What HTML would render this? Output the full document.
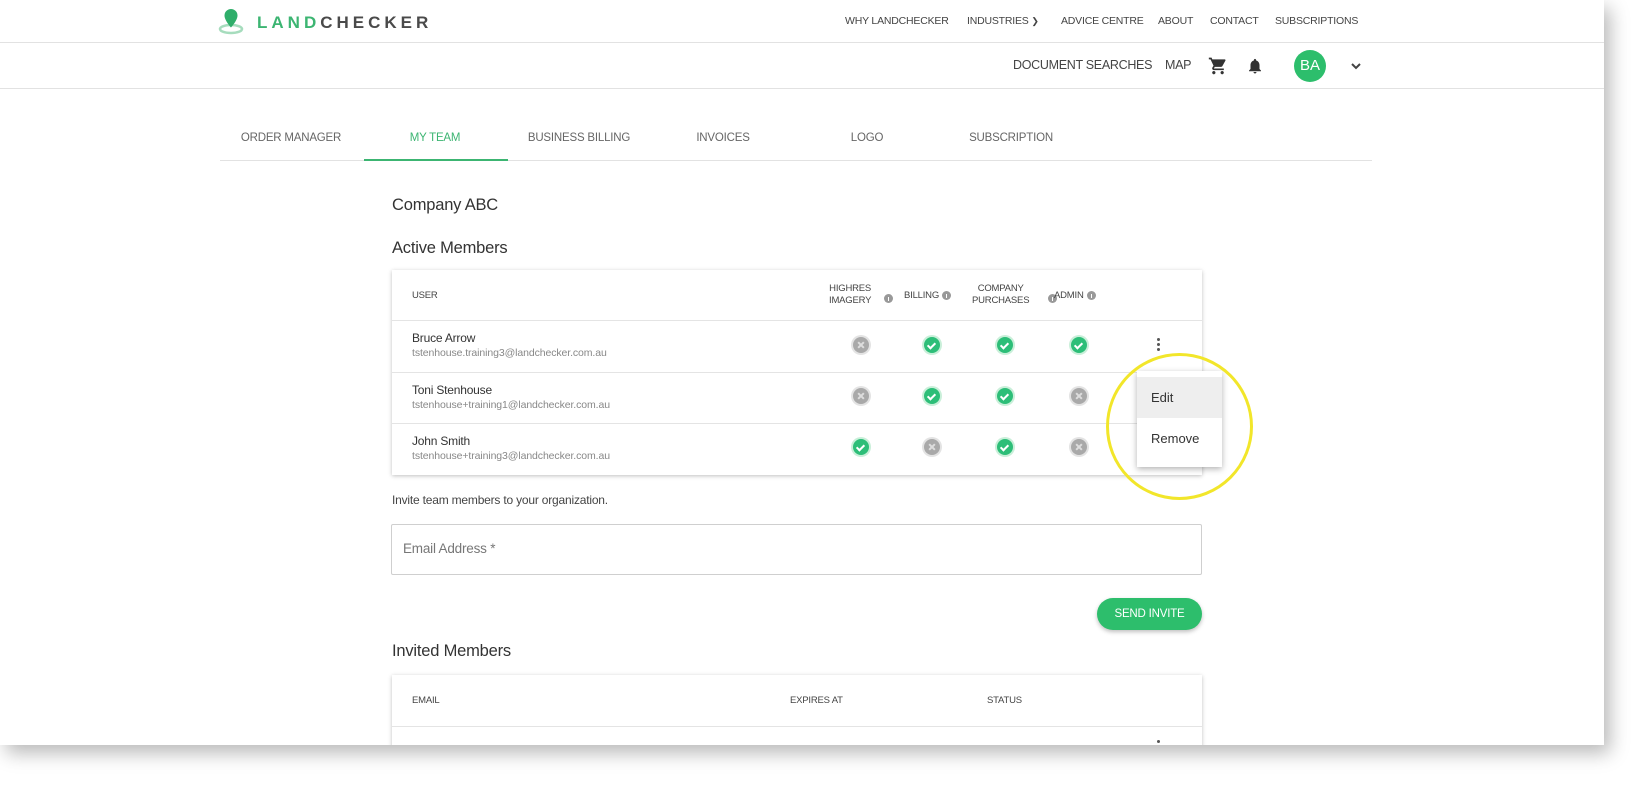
<!DOCTYPE html>
<html><head><meta charset="utf-8"><style>
*{margin:0;padding:0;box-sizing:border-box}
body{width:1644px;height:798px;background:#fff;font-family:"Liberation Sans",sans-serif;position:relative;overflow:hidden;color:#333}
.page{position:absolute;left:0;top:0;width:1604px;height:745px;background:#fff;box-shadow:6px 8px 18px rgba(0,0,0,.28);overflow:hidden}
.a{position:absolute;white-space:nowrap}
.nav{font-size:10.5px;color:#444;top:15px;letter-spacing:-0.2px}
.nav2{font-size:12.5px;color:#444;top:58px;letter-spacing:-0.3px}
.hl{position:absolute;left:0;width:1604px;height:1px;background:#e2e2e2}
.tab{position:absolute;top:132px;font-size:11.5px;color:#666;width:144px;text-align:center;letter-spacing:-0.2px}
.card{position:absolute;left:392px;width:810px;background:#fff;box-shadow:0 1px 4px rgba(0,0,0,.25)}
.rl{position:absolute;left:0;width:100%;height:1px;background:#e4e4e4}
.th{font-size:9.5px;color:#444;text-align:center;line-height:12px;letter-spacing:-0.2px}
.nm{font-size:12px;color:#333;letter-spacing:-0.2px}
.em{font-size:10.5px;color:#888;letter-spacing:-0.1px}
.ok,.no{position:absolute;width:16px;height:16px;border-radius:50%}
.ok{background:#2dbe78;box-shadow:0 0 0 2px #c9efd9}
.no{background:#a9a9a9;box-shadow:0 0 0 2px #e3e3e3}
.ok:after{content:"";position:absolute;left:5px;top:3.5px;width:3px;height:6px;border:solid #fff;border-width:0 2px 2px 0;transform:rotate(45deg)}
.no:before,.no:after{content:"";position:absolute;left:7px;top:4px;width:2px;height:8px;background:#ddd;transform:rotate(45deg)}
.no:after{transform:rotate(-45deg)}
.i{display:inline-block;width:9px;height:9px;border-radius:50%;background:#999;vertical-align:middle;margin-left:3px;position:relative}
.i:after{content:"";position:absolute;left:4px;top:3px;width:1px;height:4px;background:#fff}
.dot{position:absolute;width:3px;height:3px;border-radius:50%;background:#555}
.h{font-size:16.5px;color:#333;letter-spacing:-0.2px}
</style></head><body>
<div class="page">
<svg class="a" style="left:218px;top:7px" width="36" height="28" viewBox="0 0 36 28"><ellipse cx="13" cy="22" rx="11" ry="4" fill="none" stroke="#a6dcbd" stroke-width="2.5"/><path d="M13 2a6.5 6.5 0 0 1 6.5 6.5c0 5-6.5 12-6.5 12s-6.5-7-6.5-12A6.5 6.5 0 0 1 13 2z" fill="#2fae6a"/></svg>
<div class="a" style="left:257px;top:13px;font-size:17px;letter-spacing:4px;font-weight:bold"><span style="color:#3cb572">LAND</span><span style="color:#4a4a4a">CHECKER</span></div>
<div class="a nav" style="left:845px">WHY LANDCHECKER</div>
<div class="a nav" style="left:967px">INDUSTRIES <span style="font-size:9px">&#10095;</span></div>
<div class="a nav" style="left:1061px">ADVICE CENTRE</div>
<div class="a nav" style="left:1158px">ABOUT</div>
<div class="a nav" style="left:1210px">CONTACT</div>
<div class="a nav" style="left:1275px">SUBSCRIPTIONS</div>
<div class="hl" style="top:42px"></div>
<div class="a nav2" style="left:1013px">DOCUMENT SEARCHES</div>
<div class="a nav2" style="left:1165px">MAP</div>
<svg class="a" style="left:1208px;top:56px" width="20" height="20" viewBox="0 0 24 24"><path fill="#333" d="M7 18c-1.1 0-2 .9-2 2s.9 2 2 2 2-.9 2-2-.9-2-2-2zM1 2v2h2l3.6 7.6-1.4 2.4c-.1.3-.2.6-.2 1 0 1.1.9 2 2 2h12v-2H7.4c-.1 0-.2-.1-.2-.2v-.1l.9-1.7h7.5c.8 0 1.4-.4 1.700-1l3.6-6.5c.1-.2.1-.3.1-.5 0-.6-.4-1-1-1H5.2l-.9-2H1zm16 16c-1.1 0-2 .9-2 2s.9 2 2 2 2-.9 2-2-.9-2-2-2z"/></svg>
<svg class="a" style="left:1246px;top:56px" width="18" height="20" viewBox="0 0 24 24"><path fill="#333" d="M12 22c1.1 0 2-.9 2-2h-4c0 1.1.9 2 2 2zm6-6v-5c0-3.1-1.6-5.6-4.5-6.3V4c0-.8-.7-1.5-1.5-1.5s-1.5.7-1.5 1.5v.7C7.6 5.4 6 7.9 6 11v5l-2 2v1h16v-1l-2-2z"/></svg>
<div class="a" style="left:1294px;top:50px;width:32px;height:32px;border-radius:50%;background:#2dbe6c;color:#fff;font-size:15px;text-align:center;line-height:32px">BA</div>
<svg class="a" style="left:1350px;top:61px" width="12" height="10"><path d="M2 3l4 4 4-4" stroke="#444" stroke-width="2" fill="none"/></svg>
<div class="hl" style="top:88px"></div>
<div class="tab" style="left:219px">ORDER MANAGER</div>
<div class="tab" style="left:363px;color:#3cb572">MY TEAM</div>
<div class="tab" style="left:507px">BUSINESS BILLING</div>
<div class="tab" style="left:651px">INVOICES</div>
<div class="tab" style="left:795px">LOGO</div>
<div class="tab" style="left:939px">SUBSCRIPTION</div>
<div class="a" style="left:220px;top:160px;width:1152px;height:1px;background:#e2e2e2"></div>
<div class="a" style="left:364px;top:159px;width:144px;height:2px;background:#3cb572"></div>
<div class="a h" style="left:392px;top:196px">Company ABC</div>
<div class="a h" style="left:392px;top:239px">Active Members</div>
<div class="card" style="top:270px;height:205px">
 <div class="a th" style="left:20px;top:20px">USER</div>
 <div class="a th" style="left:437px;top:13px">HIGHRES<br>IMAGERY</div><span class="a i" style="left:489px;top:20px"></span>
 <div class="a th" style="left:512px;top:20px">BILLING<span class="i"></span></div>
 <div class="a th" style="left:580px;top:13px">COMPANY<br>PURCHASES</div><span class="a i" style="left:637px;top:20px"></span>
 <div class="a th" style="left:662px;top:20px">ADMIN<span class="i"></span></div>
 <div class="rl" style="top:50px"></div><div class="rl" style="top:102px"></div><div class="rl" style="top:153px"></div>
 <div class="a nm" style="left:20px;top:61px">Bruce Arrow</div><div class="a em" style="left:20px;top:77px">tstenhouse.training3@landchecker.com.au</div>
 <div class="a nm" style="left:20px;top:113px">Toni Stenhouse</div><div class="a em" style="left:20px;top:129px">tstenhouse+training1@landchecker.com.au</div>
 <div class="a nm" style="left:20px;top:164px">John Smith</div><div class="a em" style="left:20px;top:180px">tstenhouse+training3@landchecker.com.au</div>
 <div class="no" style="left:461px;top:67px"></div><div class="ok" style="left:532px;top:67px"></div><div class="ok" style="left:605px;top:67px"></div><div class="ok" style="left:679px;top:67px"></div>
 <div class="no" style="left:461px;top:118px"></div><div class="ok" style="left:532px;top:118px"></div><div class="ok" style="left:605px;top:118px"></div><div class="no" style="left:679px;top:118px"></div>
 <div class="ok" style="left:461px;top:169px"></div><div class="no" style="left:532px;top:169px"></div><div class="ok" style="left:605px;top:169px"></div><div class="no" style="left:679px;top:169px"></div>
 <div class="dot" style="left:765px;top:68px"></div><div class="dot" style="left:765px;top:73px"></div><div class="dot" style="left:765px;top:78px"></div>
</div>
<div class="a" style="left:1137px;top:371px;width:85px;height:96px;background:#fff;box-shadow:0 2px 6px rgba(0,0,0,.3)">
 <div style="position:absolute;left:0;top:6px;width:85px;height:41px;background:#eee"></div>
 <div class="a" style="left:14px;top:19px;font-size:13px;color:#333">Edit</div>
 <div class="a" style="left:14px;top:60px;font-size:13px;color:#333">Remove</div>
</div>
<div class="a" style="left:1106px;top:353px;width:147px;height:147px;border-radius:50%;border:3px solid #f2e62a"></div>
<div class="a" style="left:392px;top:493px;font-size:12px;color:#444;letter-spacing:-0.2px">Invite team members to your organization.</div>
<div class="a" style="left:391px;top:524px;width:811px;height:51px;border:1px solid #cfcfcf;border-radius:2px"></div>
<div class="a" style="left:403px;top:541px;font-size:13.5px;color:#777;letter-spacing:-0.2px">Email Address *</div>
<div class="a" style="left:1097px;top:598px;width:105px;height:32px;border-radius:16px;background:#2dbe6c;box-shadow:0 2px 4px rgba(0,0,0,.25);color:#fff;font-size:11.5px;text-align:center;line-height:32px;letter-spacing:-0.2px">SEND INVITE</div>
<div class="a h" style="left:392px;top:642px">Invited Members</div>
<div class="card" style="top:675px;height:100px">
 <div class="a th" style="left:20px;top:20px">EMAIL</div>
 <div class="a th" style="left:398px;top:20px">EXPIRES AT</div>
 <div class="a th" style="left:595px;top:20px">STATUS</div>
 <div class="rl" style="top:51px"></div>
 <div class="dot" style="left:765px;top:65px"></div>
</div>
</div>
</body></html>
